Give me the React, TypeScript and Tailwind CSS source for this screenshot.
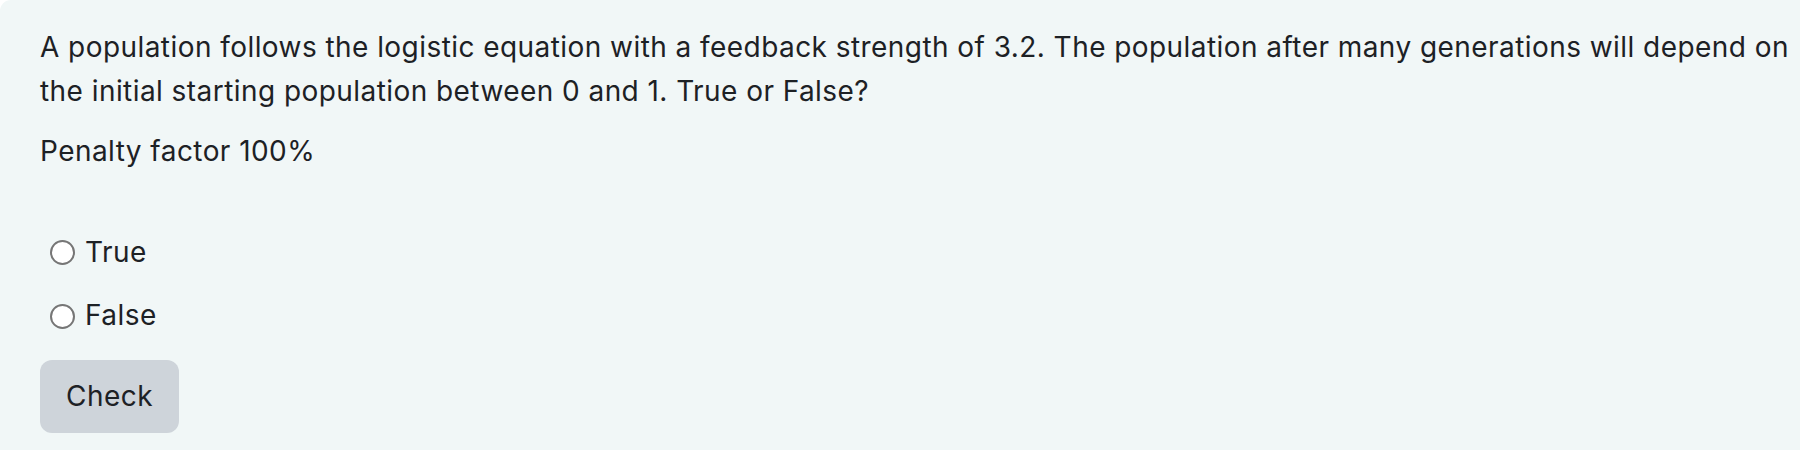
import React from "react";

export default function App() {
  return (
    <div className="w-[1800px] h-[450px] bg-white overflow-hidden" style={{ fontFamily: "Inter, 'Noto Sans', sans-serif" }}>
      <div className="w-[1820px] h-[470px] bg-[#f1f7f7] rounded-[11px] pl-[40px] pt-[26px] text-[#1d2125] text-[28px] tracking-[0.44px] leading-[43.6px]">
        <p className="w-[1760px]">
          A population follows the logistic equation with a feedback strength of 3.2. The population after many generations will depend on the initial starting population between 0 and 1. True or False?
        </p>
        <p className="mt-[17px]">Penalty factor 100%</p>
        <div className="mt-[57px] flex flex-col gap-[20px]">
          <label className="flex items-center gap-[10px] pl-[10px]">
            <span className="w-[25px] h-[25px] rounded-full border-2 border-[#767676] bg-white" />
            <span>True</span>
          </label>
          <label className="flex items-center gap-[10px] pl-[10px]">
            <span className="w-[25px] h-[25px] rounded-full border-2 border-[#767676] bg-white" />
            <span>False</span>
          </label>
        </div>
        <button className="mt-[22px] w-[139px] h-[73px] rounded-[12px] bg-[#ced4da] text-[#1d2125] flex items-center justify-center">
          Check
        </button>
      </div>
    </div>
  );
}
